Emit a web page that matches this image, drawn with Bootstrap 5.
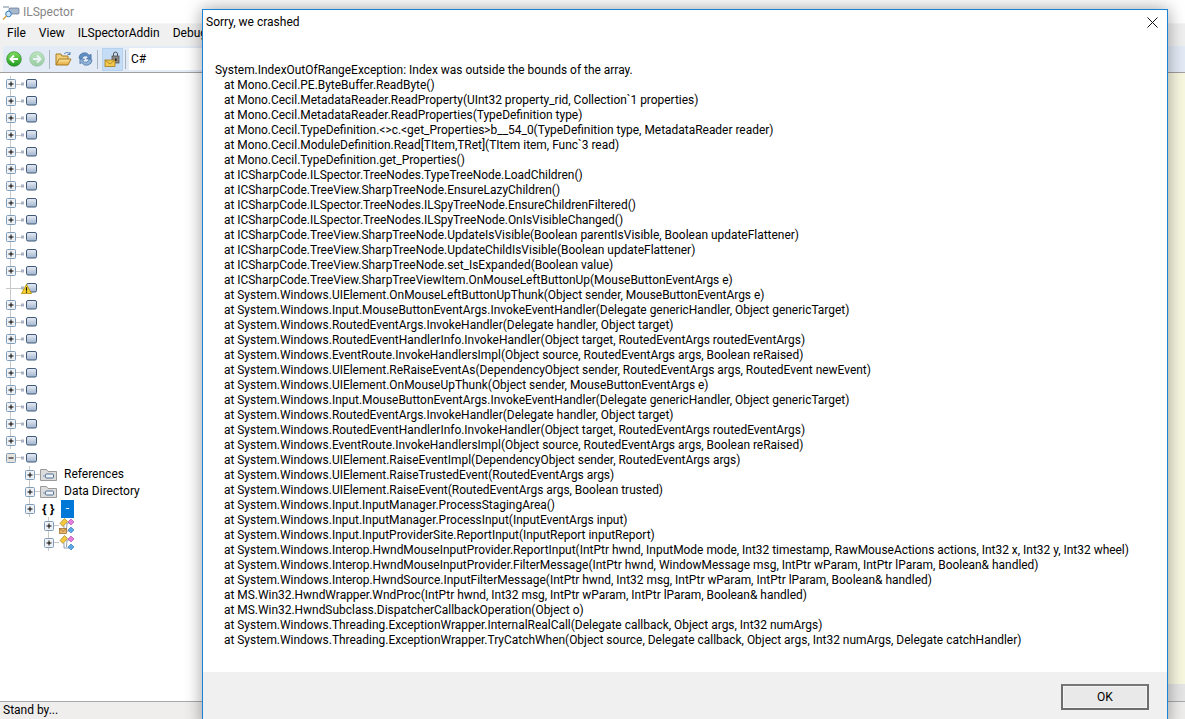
<!DOCTYPE html>
<html><head><meta charset="utf-8"><title>ILSpector</title>
<link href="https://cdn.jsdelivr.net/npm/bootstrap@5.3.0/dist/css/bootstrap.min.css" rel="stylesheet">
<style>
html,body{margin:0;height:719px;overflow:hidden;background:#fff}
body{font-family:Roboto,"Noto Sans","Liberation Sans",sans-serif;font-size:12px;color:#000}
.app-shell{position:relative;width:1185px;height:719px;overflow:hidden}
.title-row{height:23px;background:#fff;padding-left:2px}
.title-row span{color:#868686;font-size:12px;margin-left:3px}
.menu-row{height:23px;background:#f0f0f0;padding:0 0 4px 7px;gap:13px;border-top:1px solid #f6f6f6}
.tool-row{height:27px;background:#f0f0f0;border-bottom:1px solid #a0a0a0}
.tool-inner{height:26px;background:#e3ebf6;padding-left:3px;width:100%;border-radius:3px 0 0 0;margin-left:3px}
.tool-sep{width:1px;height:19px;background:#a9b4c2;margin:0 2px}
.fwd-ic{margin-left:7px}.sep-a{margin-left:4px}.open-ic{margin-left:3px}.sync-ic{margin-left:6px}.sep-b{margin-left:4px;margin-right:4px}
.tool-on{width:21px;height:23px;background:#c4dcf5;border:1px solid #b5d2ef}
.lang-box{width:300px;height:22px;background:#fff;margin-left:1px;padding-left:2px;line-height:22px;font-size:12px}
.work-row{flex:1;min-height:0}
.tree-pane{width:620px;background:#fff;padding-top:3px}
.side-wrap{flex:1;background:#e6e6e6}
.side-pane{flex:1;background:#f8f8e1;margin-bottom:17px}
.tree-row{height:16.97px;position:relative}
.tree-row svg{display:block;position:relative}
.tree-row .name{line-height:17px;font-size:12px;margin-left:7px}
.lvl0{padding-left:6px}.lvl1{padding-left:25px}.lvl2{padding-left:44px}
.vline{position:absolute;top:0;bottom:0;width:1px;background:#c8c8c8}
.v0{left:10px}.v1{left:29px}.v2{left:48px}
.hlink{width:5px;height:1px;background:#c8c8c8;flex:none}
.hlong{width:15px;height:1px;background:#c8c8c8;flex:none}
.warn-wrap{position:relative}
.tree-row svg.warn-ic{position:absolute;left:0;top:1px}
.tree-row svg.mail-ic{top:10px}
.sel-name{background:#0078d7;color:#fff;width:13px;height:18px;line-height:17px;text-align:center;margin-left:6px}
.braces{font-weight:700;font-family:"Noto Sans",sans-serif;font-size:12px;margin-left:7px;width:13px;white-space:nowrap;line-height:17px}
.status-row{height:18px;background:#f0eded;border-top:1px solid #a9a9a9;padding-left:3px;line-height:17px}
.crash-box{position:absolute;left:202px;top:9px;width:966px;height:720px;background:#fff;border:1px solid #1883d7;box-shadow:0 0 16px rgba(0,0,0,.38)}
.crash-head{height:25px;padding:3px 0 0 3px}
.crash-x{position:absolute;left:944px;top:7px;width:11px;height:11px}
.crash-body{height:637px;padding-top:28px;padding-left:12px;overflow:hidden}
.crash-body pre{margin:0;font:inherit;font-size:11.95px;line-height:15px;color:#000;overflow:visible}
.crash-foot{height:60px;background:#f0f0f0;padding-top:12px;padding-right:18px}
.ok-btn{width:88px;height:26px;padding:0;border:2px solid #6d6d6d;border-top-color:#777;border-radius:0;background:#e9e9e9;color:#000;font-size:12px;line-height:20px;box-shadow:inset 0 0 0 1px #f4f4f4}
</style></head>
<body>
<svg width="0" height="0" class="position-absolute">
<defs>
<linearGradient id="asm" x1="0" y1="0" x2="0" y2="1"><stop offset="0" stop-color="#e8edf5"/><stop offset="1" stop-color="#9fb3cd"/></linearGradient>
<linearGradient id="gr" x1="0" y1="0" x2="0" y2="1"><stop offset="0" stop-color="#7fdc5d"/><stop offset="1" stop-color="#1f9a23"/></linearGradient>
<linearGradient id="fold" x1="0" y1="0" x2="0" y2="1"><stop offset="0" stop-color="#fbe7a2"/><stop offset="1" stop-color="#e4a93c"/></linearGradient>
<symbol id="plus" viewBox="0 0 10 10"><rect x=".5" y=".5" width="9" height="9" rx="1" fill="#eef1f5" stroke="#7f9db9"/><path d="M2.500 5h5M5 2.500v5" stroke="#000" fill="none"/></symbol>
<symbol id="minus" viewBox="0 0 10 10"><rect x=".5" y=".5" width="9" height="9" rx="1" fill="#e6e2dc" stroke="#7f9db9"/><path d="M2.500 5h5" stroke="#000" fill="none"/></symbol>
<symbol id="asmb" viewBox="0 0 16 10"><rect x="0" y="3.500" width="3" height="3" fill="#aab4c4"/><rect x="5.500" y=".5" width="10" height="8.500" rx="1.500" fill="url(#asm)" stroke="#3f5878"/></symbol>
<symbol id="refs" viewBox="0 0 17 13"><path d="M.5 12.500V1.500h6l1.500 2h8.500v9z" fill="#dcdcdc" stroke="#9a9a9a"/><rect x="5.500" y="6" width="8" height="4" rx="1" fill="#eef3f9" stroke="#51708f"/><rect x="3" y="7.500" width="2.500" height="1.200" fill="#8ba2bd"/></symbol>
<symbol id="cls" viewBox="0 0 16 16"><path d="M1 5.500l4.500-5 3 3-4.500 5z" fill="#f3c93f" stroke="#a8801a" stroke-width=".7"/><path d="M8 5h3M5 8v5h5M8 5l-.5 7" stroke="#7f93ad" fill="none" stroke-width=".9"/><path d="M12 1l3 3-3 3-3-3z" fill="#e77ce0" stroke="#a4489f" stroke-width=".6"/><path d="M12 9l3 3-3 3-3-3z" fill="#58a8e8" stroke="#2c6fae" stroke-width=".6"/></symbol>
<symbol id="mail" viewBox="0 0 8 6"><rect x=".4" y=".4" width="7.200" height="5.200" fill="#e8b76a" stroke="#9a6a2b" stroke-width=".7"/><path d="M.4 .4L4 3.500 7.600 .4" stroke="#9a6a2b" fill="none" stroke-width=".7"/></symbol>
</defs>
</svg>
<div class="app-shell d-flex flex-column">
  <div class="title-row d-flex align-items-center">
    <svg width="18" height="18" viewBox="0 0 18 18"><rect x="7" y="5" width="10" height="6" rx="1" fill="#a8b8cc" stroke="#5a7090" stroke-width=".7"/><rect x="1" y="3" width="6" height="2" fill="#b7c2d0"/><circle cx="6.500" cy="11" r="2.800" fill="#cfe6fa" stroke="#2f7dc4"/><path d="M4.500 13l-3.500 3.500" stroke="#d9a441" stroke-width="1.600"/></svg>
    <span>ILSpector</span>
  </div>
  <div class="menu-row d-flex align-items-center"><span>File</span><span>View</span><span>ILSpectorAddin</span><span>Debug</span></div>
  <div class="tool-row d-flex">
    <div class="tool-inner d-flex align-items-center">
      <svg width="16" height="16" viewBox="0 0 16 16"><circle cx="8" cy="8" r="7.300" fill="url(#gr)" stroke="#1d7a1f" stroke-width=".6"/><path d="M12 8H5M8 4.500L4.500 8 8 11.500" stroke="#fff" stroke-width="2" fill="none"/></svg>
      <svg width="16" height="16" viewBox="0 0 16 16" class="fwd-ic" opacity=".38"><circle cx="8" cy="8" r="7.300" fill="url(#gr)" stroke="#1d7a1f" stroke-width=".6"/><path d="M4 8h7M8 4.500L11.500 8 8 11.500" stroke="#fff" stroke-width="2" fill="none"/></svg>
      <div class="tool-sep sep-a"></div>
      <svg width="17" height="16" viewBox="0 0 17 16" class="open-ic"><path d="M1 14V3h5l1 2h6v3" fill="#f0cf7a" stroke="#a97c25"/><path d="M1 14l3-6h12l-3 6z" fill="url(#fold)" stroke="#a97c25"/><path d="M9 3c2-2 4-2 6 0M15 1v2.500h-2.500" stroke="#4d7fb5" fill="none"/></svg>
      <svg width="15" height="16" viewBox="0 0 16 16" class="sync-ic"><path d="M1 7a6 6 0 0 1 11-3l2-1v5H9l2-2a4 4 0 0 0-7 2z" fill="#5f8fc4" stroke="#3f6a9c" stroke-width=".7"/><path d="M15 9a6 6 0 0 1-11 3l-2 1V8h5l-2 2a4 4 0 0 0 7-2z" fill="#8fb3da" stroke="#3f6a9c" stroke-width=".7"/></svg>
      <div class="tool-sep sep-b"></div>
      <div class="tool-on d-flex align-items-center justify-content-center">
        <svg width="17" height="17" viewBox="0 0 17 17"><rect x="8" y="5" width="7" height="7" fill="#8a8a8a" stroke="#444" stroke-width=".7"/><path d="M9.500 5V3a2 2 0 0 1 4 0v2" stroke="#555" fill="none"/><rect x="11" y="7.500" width="1.500" height="2.500" fill="#111"/><rect x="1" y="9" width="10" height="6.500" fill="#f2c94f" stroke="#a67c1d" stroke-width=".8"/><path d="M1 9l5 4 5-4" stroke="#a67c1d" fill="none" stroke-width=".8"/></svg>
      </div>
      <div class="tool-sep"></div>
      <div class="lang-box">C#</div>
    </div>
  </div>
  <div class="work-row d-flex">
    <div class="tree-pane"><div id="tree"></div></div>
    <div class="side-wrap d-flex flex-column"><div class="side-pane"></div></div>
  </div>
  <div class="status-row">Stand by...</div>

  <div class="crash-box">
    <div class="crash-head">Sorry, we crashed</div>
    <svg class="crash-x" viewBox="0 0 11 11"><path d="M.5 .5l10 10M10.500 .5l-10 10" stroke="#111" fill="none"/></svg>
    <div class="crash-body"><pre>System.IndexOutOfRangeException: Index was outside the bounds of the array.
   at Mono.Cecil.PE.ByteBuffer.ReadByte()
   at Mono.Cecil.MetadataReader.ReadProperty(UInt32 property_rid, Collection`1 properties)
   at Mono.Cecil.MetadataReader.ReadProperties(TypeDefinition type)
   at Mono.Cecil.TypeDefinition.&lt;&gt;c.&lt;get_Properties&gt;b__54_0(TypeDefinition type, MetadataReader reader)
   at Mono.Cecil.ModuleDefinition.Read[TItem,TRet](TItem item, Func`3 read)
   at Mono.Cecil.TypeDefinition.get_Properties()
   at ICSharpCode.ILSpector.TreeNodes.TypeTreeNode.LoadChildren()
   at ICSharpCode.TreeView.SharpTreeNode.EnsureLazyChildren()
   at ICSharpCode.ILSpector.TreeNodes.ILSpyTreeNode.EnsureChildrenFiltered()
   at ICSharpCode.ILSpector.TreeNodes.ILSpyTreeNode.OnIsVisibleChanged()
   at ICSharpCode.TreeView.SharpTreeNode.UpdateIsVisible(Boolean parentIsVisible, Boolean updateFlattener)
   at ICSharpCode.TreeView.SharpTreeNode.UpdateChildIsVisible(Boolean updateFlattener)
   at ICSharpCode.TreeView.SharpTreeNode.set_IsExpanded(Boolean value)
   at ICSharpCode.TreeView.SharpTreeViewItem.OnMouseLeftButtonUp(MouseButtonEventArgs e)
   at System.Windows.UIElement.OnMouseLeftButtonUpThunk(Object sender, MouseButtonEventArgs e)
   at System.Windows.Input.MouseButtonEventArgs.InvokeEventHandler(Delegate genericHandler, Object genericTarget)
   at System.Windows.RoutedEventArgs.InvokeHandler(Delegate handler, Object target)
   at System.Windows.RoutedEventHandlerInfo.InvokeHandler(Object target, RoutedEventArgs routedEventArgs)
   at System.Windows.EventRoute.InvokeHandlersImpl(Object source, RoutedEventArgs args, Boolean reRaised)
   at System.Windows.UIElement.ReRaiseEventAs(DependencyObject sender, RoutedEventArgs args, RoutedEvent newEvent)
   at System.Windows.UIElement.OnMouseUpThunk(Object sender, MouseButtonEventArgs e)
   at System.Windows.Input.MouseButtonEventArgs.InvokeEventHandler(Delegate genericHandler, Object genericTarget)
   at System.Windows.RoutedEventArgs.InvokeHandler(Delegate handler, Object target)
   at System.Windows.RoutedEventHandlerInfo.InvokeHandler(Object target, RoutedEventArgs routedEventArgs)
   at System.Windows.EventRoute.InvokeHandlersImpl(Object source, RoutedEventArgs args, Boolean reRaised)
   at System.Windows.UIElement.RaiseEventImpl(DependencyObject sender, RoutedEventArgs args)
   at System.Windows.UIElement.RaiseTrustedEvent(RoutedEventArgs args)
   at System.Windows.UIElement.RaiseEvent(RoutedEventArgs args, Boolean trusted)
   at System.Windows.Input.InputManager.ProcessStagingArea()
   at System.Windows.Input.InputManager.ProcessInput(InputEventArgs input)
   at System.Windows.Input.InputProviderSite.ReportInput(InputReport inputReport)
   at System.Windows.Interop.HwndMouseInputProvider.ReportInput(IntPtr hwnd, InputMode mode, Int32 timestamp, RawMouseActions actions, Int32 x, Int32 y, Int32 wheel)
   at System.Windows.Interop.HwndMouseInputProvider.FilterMessage(IntPtr hwnd, WindowMessage msg, IntPtr wParam, IntPtr lParam, Boolean&amp; handled)
   at System.Windows.Interop.HwndSource.InputFilterMessage(IntPtr hwnd, Int32 msg, IntPtr wParam, IntPtr lParam, Boolean&amp; handled)
   at MS.Win32.HwndWrapper.WndProc(IntPtr hwnd, Int32 msg, IntPtr wParam, IntPtr lParam, Boolean&amp; handled)
   at MS.Win32.HwndSubclass.DispatcherCallbackOperation(Object o)
   at System.Windows.Threading.ExceptionWrapper.InternalRealCall(Delegate callback, Object args, Int32 numArgs)
   at System.Windows.Threading.ExceptionWrapper.TryCatchWhen(Object source, Delegate callback, Object args, Int32 numArgs, Delegate catchHandler)</pre></div>
    <div class="crash-foot d-flex justify-content-end align-items-start"><button class="btn ok-btn" type="button">OK</button></div>
  </div>
</div>
<script>
const t=document.getElementById('tree');let h='';
const box=(ic)=>`<svg width="10" height="10"><use href="#${ic}"/></svg>`;
const asm=`<svg width="16" height="10"><use href="#asmb"/></svg>`;
for(let i=0;i<23;i++){
  if(i==12){h+=`<div class="tree-row d-flex align-items-center lvl0"><span class="vline v0"></span><span class="hlong"></span><span class="warn-wrap">${asm}<svg class="warn-ic" width="11" height="10" viewBox="0 0 13 12"><path d="M6.500.5L12.500 11.500H.5z" fill="#f6d32d" stroke="#b58b00"/><path d="M6.500 4v4M6.500 9v1.500" stroke="#111" stroke-width="1.400"/></svg></span></div>`;continue}
  h+=`<div class="tree-row d-flex align-items-center lvl0">${i<22?'<span class="vline v0"></span>':''}${box(i==22?'minus':'plus')}<span class="hlink"></span>${asm}</div>`;
}
const ch=(lbl)=>`<div class="tree-row d-flex align-items-center lvl1"><span class="vline v1"></span>${box('plus')}<span class="hlink"></span><svg width="17" height="13"><use href="#refs"/></svg><span class="name">${lbl}</span></div>`;
h+=ch('References')+ch('Data Directory');
h+=`<div class="tree-row d-flex align-items-center lvl1"><span class="vline v1"></span>${box('plus')}<span class="braces">{ }</span><span class="sel-name">-</span></div>`;
for(let i=0;i<2;i++)h+=`<div class="tree-row d-flex align-items-center lvl2"><span class="vline v2"></span>${box('plus')}<span class="hlink"></span><span class="warn-wrap"><svg width="16" height="16"><use href="#cls"/></svg>${i==0?'<svg class="warn-ic mail-ic" width="8" height="6"><use href="#mail"/></svg>':''}</span></div>`;
t.innerHTML=h;
</script>
<script src="https://cdn.jsdelivr.net/npm/bootstrap@5.3.0/dist/js/bootstrap.bundle.min.js"></script>
</body></html>
